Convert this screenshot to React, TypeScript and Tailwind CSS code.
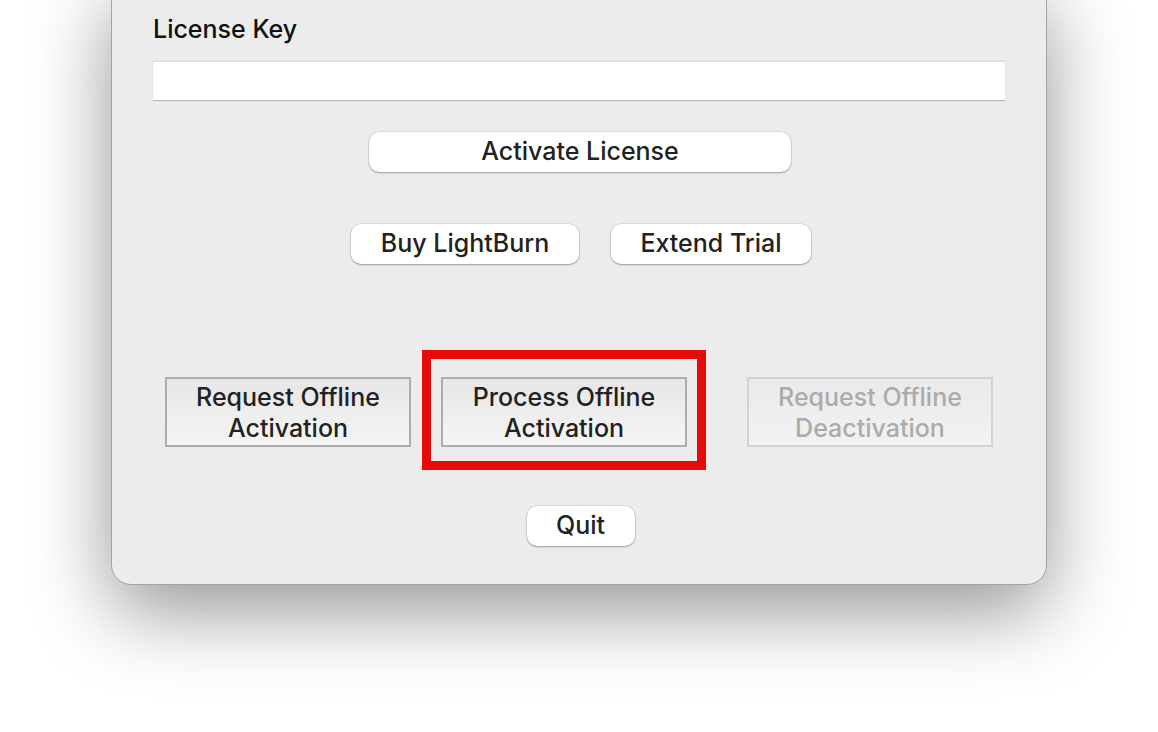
import React from "react";

const font = { fontFamily: "Inter, 'Noto Sans', sans-serif" };

function MacButton({ children, className }: { children: React.ReactNode; className: string }) {
  return (
    <div
      className={`flex h-[40px] items-center justify-center rounded-[10px] bg-white text-[25px] font-medium text-[#222222] shadow-[0_0_0_0.5px_rgba(0,0,0,0.12),0_1px_2px_rgba(0,0,0,0.3)] ${className}`}
    >
      {children}
    </div>
  );
}

function OfflineButton({ lines, disabled }: { lines: string[]; disabled?: boolean }) {
  return (
    <div
      className={
        disabled
          ? "flex h-[70px] w-[246px] flex-col items-center justify-center border-2 border-[#d2d2d2] bg-gradient-to-b from-[#eaeaea] to-[#f2f2f2] pt-[2px] text-[25px] font-medium leading-[31px] text-[#ababab]"
          : "flex h-[70px] w-[246px] flex-col items-center justify-center border-2 border-[#adadad] bg-gradient-to-b from-[#e6e6e6] to-[#f5f5f5] pt-[2px] text-[25px] font-medium leading-[31px] text-[#222222]"
      }
    >
      {lines.map((l) => (
        <span key={l}>{l}</span>
      ))}
    </div>
  );
}

export default function App() {
  return (
    <div className="relative h-[732px] w-[1158px] overflow-hidden bg-white" style={font}>
      <div className="ml-[111px] mt-[-20px] flex h-[605px] w-[936px] flex-col rounded-b-[20px] border border-[#a3a3a3] bg-[#ececec] shadow-[0_26px_80px_rgba(0,0,0,0.42)]">
        <div className="ml-[41px] mt-[33px] h-[30px] text-[25px] font-medium leading-[30px] text-[#111111]">License Key</div>
        <div className="ml-[41px] mt-[17px] h-[40px] w-[852px] border-t border-b border-t-[#dcdcdc] border-b-[#b9b9b9] bg-white shadow-[0_0_0_0.5px_rgba(0,0,0,0.06)]" />
        <div className="mt-[31px] flex justify-center pl-[2px]">
          <MacButton className="w-[422px]">Activate License</MacButton>
        </div>
        <div className="mt-[52px] flex justify-center gap-[32px] pl-[4px]">
          <MacButton className="w-[228px]">Buy LightBurn</MacButton>
          <MacButton className="w-[200px]">Extend Trial</MacButton>
        </div>
        <div className="ml-[53px] mt-[113px] flex">
          <OfflineButton lines={["Request Offline", "Activation"]} />
          <div className="relative ml-[30px]">
            <OfflineButton lines={["Process Offline", "Activation"]} />
            <div className="absolute left-[-19px] right-[-19px] top-[-27px] bottom-[-23px] border-[9px] border-[#e60a0a]" />
          </div>
          <div className="ml-[60px]">
            <OfflineButton lines={["Request Offline", "Deactivation"]} disabled />
          </div>
        </div>
        <div className="mt-[59px] flex justify-center pl-[3px]">
          <MacButton className="w-[108px]">Quit</MacButton>
        </div>
      </div>
    </div>
  );
}
